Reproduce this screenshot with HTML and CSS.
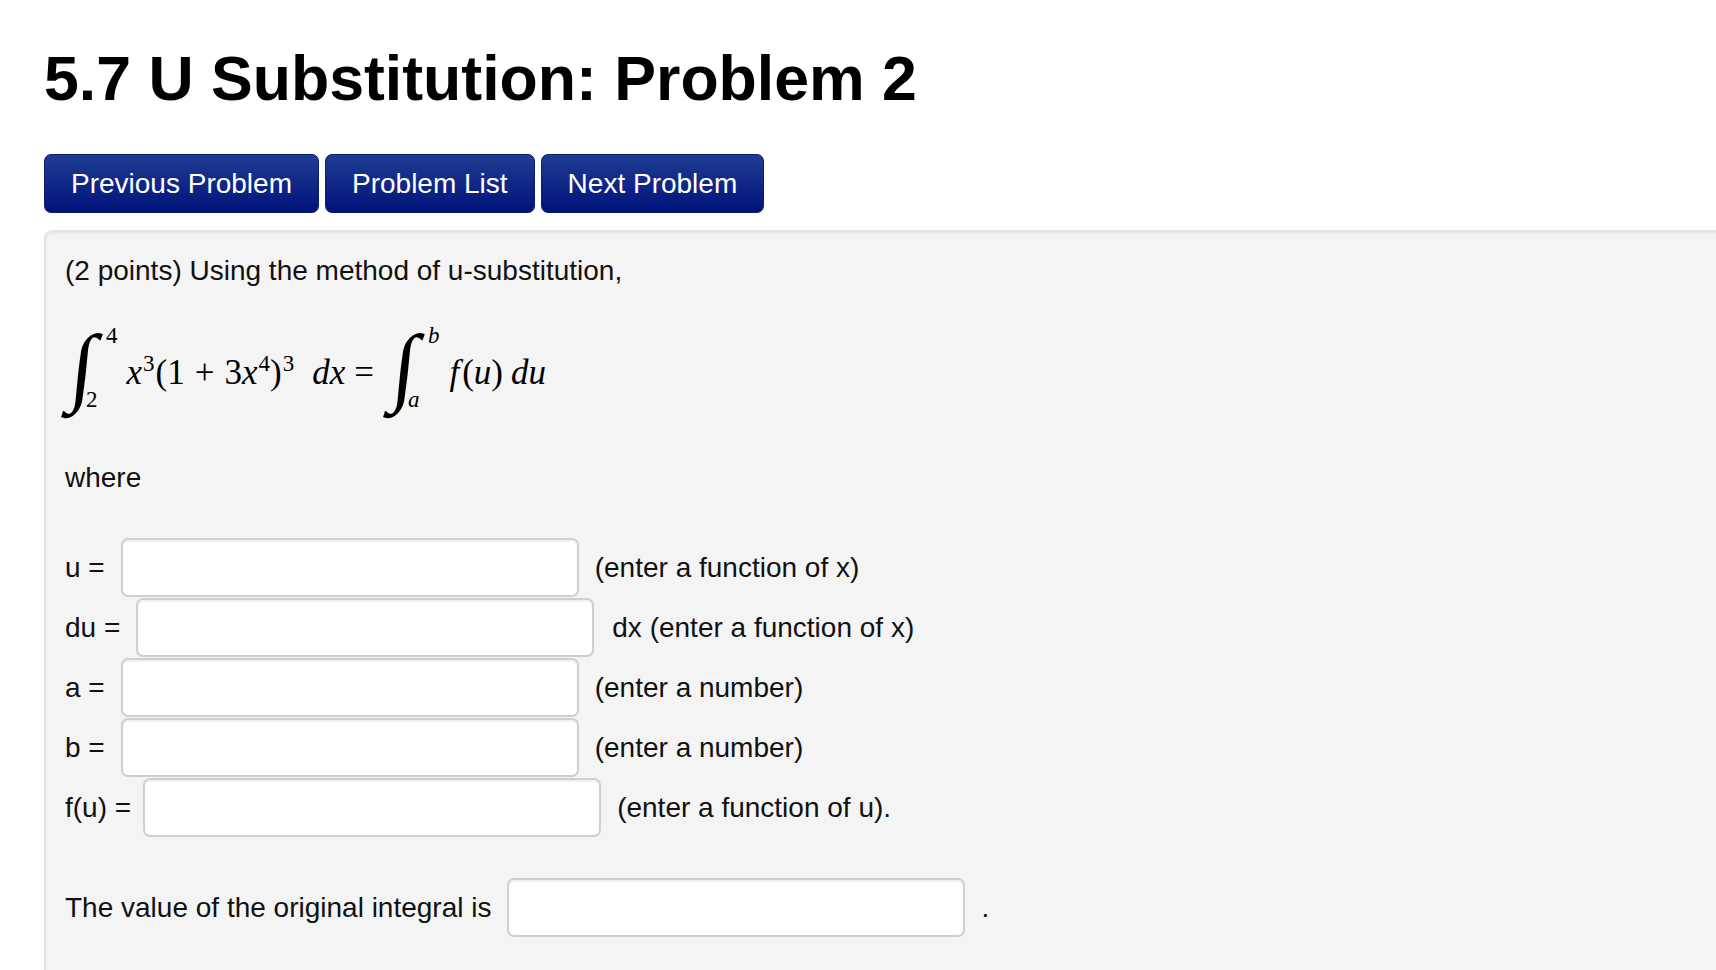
FILE: index.html
```html
<!DOCTYPE html>
<html lang="en">
<head>
  <meta charset="UTF-8">
  <title>5.7 U Substitution: Problem 2</title>
  <link rel="stylesheet" href="styles.css">
</head>
<body>
  <div class="page">
    <h1>5.7 U Substitution: Problem 2</h1>

    <div class="nav">
      <button>Previous Problem</button>
      <button>Problem List</button>
      <button>Next Problem</button>
    </div>

    <div class="problem">
      <p class="intro">(2 points) Using the method of u-substitution,</p>

      <!-- display math -->
      <div class="math">
        <span class="int">
          <span class="sign">&#8747;</span>
          <span class="up">4</span>
          <span class="lo">2</span>
        </span>
        <span class="expr"><i>x</i><sup>3</sup><span class="paren">(</span>1<span class="op">+</span>3<i>x</i><sup>4</sup>)<sup>3</sup><i class="d">d</i><i>x</i></span>
        <span class="eq">=</span>
        <span class="int">
          <span class="sign">&#8747;</span>
          <span class="up"><i>b</i></span>
          <span class="lo"><i>a</i></span>
        </span>
        <span class="expr second"><i>f</i><span class="fparen">(</span><i>u</i>)<i class="d du">d</i><i>u</i></span>
      </div>

      <p class="where">where</p>

      <div class="rows">
        <div class="row">
          <span class="label">u =</span>
          <input type="text">
          <span class="hint">(enter a function of x)</span>
        </div>
        <div class="row">
          <span class="label">du =</span>
          <input type="text">
          <span class="hint dx">dx (enter a function of x)</span>
        </div>
        <div class="row">
          <span class="label">a =</span>
          <input type="text">
          <span class="hint">(enter a number)</span>
        </div>
        <div class="row">
          <span class="label">b =</span>
          <input type="text">
          <span class="hint">(enter a number)</span>
        </div>
        <div class="row">
          <span class="label tight">f(u) =</span>
          <input type="text">
          <span class="hint">(enter a function of u).</span>
        </div>
      </div>

      <div class="row final">
        <span class="label">The value of the original integral is</span>
        <input type="text">
        <span class="hint">.</span>
      </div>
    </div>
  </div>
</body>
</html>
```

FILE: styles.css
```css
body {
  margin: 0;
  font-family: "Liberation Sans", Arial, sans-serif;
  color: #111;
  background-color: white;
  overflow: hidden;
}
.page {
  padding-left: 44px;
}
h1 {
  margin: 43px 0 0;
  font-size: 62.6px;
  font-weight: bold;
  line-height: 71px;
  color: #000;
}
.nav {
  display: flex;
  gap: 6px;
  margin-top: 40px;
}
button {
  padding: 12px 26px;
  border: 1px solid #0a1d6e;
  border-radius: 7px;
  background: linear-gradient(#1f3d92, #00127a);
  color: white;
  font-family: "Liberation Sans", Arial, sans-serif;
  font-size: 28px;
  line-height: 33px;
  cursor: pointer;
}
.problem {
  margin-top: 17px;
  margin-right: -20px;
  padding: 19px 19px 80px;
  background-color: #f4f4f4;
  border: 2px solid #e3e3e3;
  border-radius: 8px;
  box-shadow: inset 0 2px 2px rgba(0, 0, 0, 0.05);
  font-size: 28px;
  line-height: 39px;
}
.problem p {
  margin: 0;
}
.math {
  display: flex;
  align-items: center;
  margin-top: 42px;
  font-family: "Liberation Serif", "Times New Roman", serif;
  font-size: 35px;
  line-height: 38px;
  color: #000;
}
.int {
  display: inline-grid;
  grid-template-columns: 36px auto;
  grid-template-rows: 41px 41px;
  position: relative;
  top: -7px;
}
.int .sign {
  grid-row: 1 / 3;
  grid-column: 1;
  font-size: 87px;
  line-height: 82px;
  text-align: center;
  transform: skewX(-6deg);
}
.int .up,
.int .lo {
  grid-column: 2;
  font-size: 23px;
  line-height: 18px;
}
.int .up {
  grid-row: 1;
  align-self: start;
  margin-left: 5px;
  margin-top: 2px;
}
.int .lo {
  grid-row: 2;
  align-self: end;
  margin-left: -15px;
  margin-bottom: -2px;
}
.expr {
  margin-left: 9px;
  white-space: nowrap;
}
.expr.second {
  margin-left: 10px;
}
.expr sup {
  font-size: 23px;
  line-height: 0;
  vertical-align: 13px;
  margin-left: 1px;
}
.paren {
  margin-left: 1px;
}
.fparen {
  margin-left: 3px;
}
.op {
  margin: 0 10px;
}
.d {
  margin-left: 18px;
}
.d.du {
  margin-left: 8px;
}
.eq {
  margin: 0 13px 0 9px;
}
.where {
  margin-top: 44px !important;
}
.rows {
  margin-top: 40px;
}
.row {
  display: flex;
  align-items: center;
  gap: 16px;
  height: 60px;
}
.label.tight {
  margin-right: -4px;
}
input {
  box-sizing: border-box;
  width: 458px;
  height: 59px;
  margin: 0;
  padding: 6px 12px;
  border: 2px solid #cfcfcf;
  border-radius: 7px;
  background-color: white;
  box-shadow: inset 0 2px 2px rgba(0, 0, 0, 0.06);
  font-size: 28px;
}
.hint.dx {
  margin-left: 2px;
}
.row.final {
  margin-top: 40px;
}
```
